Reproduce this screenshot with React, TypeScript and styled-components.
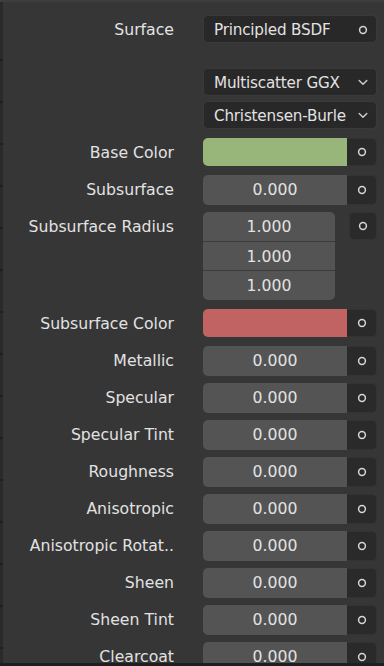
import styled, { createGlobalStyle } from 'styled-components';

const GlobalStyle = createGlobalStyle`
  html, body {
    margin: 0;
    padding: 0;
    background: #363636;
  }
  body {
    font-family: 'DejaVu Sans', 'Liberation Sans', sans-serif;
  }
`;

type Field =
  | { kind: 'menu'; text: string }
  | { kind: 'node'; text: string }
  | { kind: 'color'; color: string }
  | { kind: 'value'; value: string }
  | { kind: 'vector'; values: string[] };

interface IRow {
  label?: string;
  field: Field;
  spaceAfter?: number;
}

const ROWS: IRow[] = [
  { label: 'Surface', field: { kind: 'node', text: 'Principled BSDF' }, spaceAfter: 25 },
  { field: { kind: 'menu', text: 'Multiscatter GGX' }, spaceAfter: 5 },
  { field: { kind: 'menu', text: 'Christensen-Burle' } },
  { label: 'Base Color', field: { kind: 'color', color: '#98b57a' } },
  { label: 'Subsurface', field: { kind: 'value', value: '0.000' } },
  { label: 'Subsurface Radius', field: { kind: 'vector', values: ['1.000', '1.000', '1.000'] } },
  { label: 'Subsurface Color', field: { kind: 'color', color: '#c06362' } },
  { label: 'Metallic', field: { kind: 'value', value: '0.000' } },
  { label: 'Specular', field: { kind: 'value', value: '0.000' } },
  { label: 'Specular Tint', field: { kind: 'value', value: '0.000' } },
  { label: 'Roughness', field: { kind: 'value', value: '0.000' } },
  { label: 'Anisotropic', field: { kind: 'value', value: '0.000' } },
  { label: 'Anisotropic Rotat..', field: { kind: 'value', value: '0.000' } },
  { label: 'Sheen', field: { kind: 'value', value: '0.000' } },
  { label: 'Sheen Tint', field: { kind: 'value', value: '0.000' } },
  { label: 'Clearcoat', field: { kind: 'value', value: '0.000' } },
];

const SocketDot = () => (
  <svg width="10" height="10" viewBox="0 0 10 10">
    <circle cx="5" cy="5" r="3.4" fill="none" stroke="#d6d6d6" strokeWidth="1.5" />
  </svg>
);

const Chevron = () => (
  <svg width="10" height="7" viewBox="0 0 10 7">
    <path d="M1.2 1.5 L5 5.2 L8.8 1.5" fill="none" stroke="#cfcfcf" strokeWidth="1.4" strokeLinecap="round" strokeLinejoin="round" />
  </svg>
);

const renderField = (field: Field) => {
  switch (field.kind) {
    case 'node':
      return (
        <S.Menu>
          <S.MenuText>{field.text}</S.MenuText>
          <SocketDot />
        </S.Menu>
      );
    case 'menu':
      return (
        <S.Menu>
          <S.MenuText>{field.text}</S.MenuText>
          <Chevron />
        </S.Menu>
      );
    case 'color':
      return (
        <S.Joined>
          <S.Swatch style={{ background: field.color }} />
          <S.Socket>
            <SocketDot />
          </S.Socket>
        </S.Joined>
      );
    case 'value':
      return (
        <S.Joined>
          <S.Value>{field.value}</S.Value>
          <S.Socket>
            <SocketDot />
          </S.Socket>
        </S.Joined>
      );
    case 'vector':
      return (
        <S.VectorWrap>
          <S.Vector>
            {field.values.map((v, index) => (
              <S.VectorCell key={`${v}${index}`}>{v}</S.VectorCell>
            ))}
          </S.Vector>
          <S.LoneSocket>
            <SocketDot />
          </S.LoneSocket>
        </S.VectorWrap>
      );
  }
};

export default function App() {
  return (
    <>
      <GlobalStyle />
      <S.Screen>
        <S.Strip />
        <S.Panel>
          {ROWS.map((row, index) => (
            <S.Row key={`${row.label}${index}`} spaceAfter={row.spaceAfter ?? 9}>
              <S.Label>{row.label}</S.Label>
              {renderField(row.field)}
            </S.Row>
          ))}
        </S.Panel>
      </S.Screen>
    </>
  );
}

const S = {
  Screen: styled.div`
    width: 384px;
    height: 666px;
    display: flex;
    overflow: hidden;
    background: #363636;
    box-sizing: border-box;
    border-top: 2px solid #3d3d3d;
    border-bottom: 3px solid #1f1f1f;
  `,
  Strip: styled.div`
    width: 3px;
    flex-shrink: 0;
    background: repeating-linear-gradient(
      to bottom,
      #2a2a2a 0px,
      #2a2a2a 40px,
      #1f1f1f 40px,
      #1f1f1f 42px
    );
    background-position: 0 17px;
  `,
  Panel: styled.div`
    flex: 1;
    padding: 13px 7px 0 0;
    display: flex;
    flex-direction: column;
  `,
  Row: styled.div<{ spaceAfter: number }>`
    display: grid;
    grid-template-columns: 1fr 174px;
    column-gap: 29px;
    align-items: start;
    margin-bottom: ${({ spaceAfter }) => spaceAfter}px;
    flex-shrink: 0;
  `,
  Label: styled.div`
    height: 28px;
    line-height: 30px;
    text-align: right;
    color: #e2e2e2;
    font-size: 15.7px;
    white-space: nowrap;
  `,
  Menu: styled.div`
    height: 28px;
    box-sizing: border-box;
    display: flex;
    align-items: center;
    justify-content: space-between;
    padding: 1px 8px 0 10px;
    background: #282828;
    border: 1px solid #3a3a3a;
    border-radius: 5px;
    color: #e2e2e2;
    font-size: 15.2px;
    letter-spacing: -0.2px;
  `,
  MenuText: styled.span`
    white-space: nowrap;
    overflow: hidden;
  `,
  Joined: styled.div`
    height: 28px;
    display: grid;
    grid-template-columns: 144px 30px;
  `,
  Swatch: styled.div`
    border-radius: 5px 0 0 5px;
  `,
  Value: styled.div`
    background: #545454;
    border-radius: 5px 0 0 5px;
    color: #e2e2e2;
    font-size: 15.7px;
    line-height: 30px;
    text-align: center;
  `,
  Socket: styled.div`
    display: flex;
    align-items: center;
    justify-content: center;
    background: #2a2a2a;
    border: 1px solid #333333;
    border-left: none;
    border-radius: 0 5px 5px 0;
  `,
  VectorWrap: styled.div`
    display: grid;
    grid-template-columns: 132px 28px;
    column-gap: 14px;
    align-items: start;
  `,
  Vector: styled.div`
    height: 88px;
    display: flex;
    flex-direction: column;
    background: #545454;
    border-radius: 5px;
    overflow: hidden;
  `,
  VectorCell: styled.div`
    flex: 1;
    box-sizing: border-box;
    display: flex;
    align-items: center;
    justify-content: center;
    color: #e2e2e2;
    font-size: 15.7px;
    & + & {
      border-top: 1px solid #3c3c3c;
    }
  `,
  LoneSocket: styled.div`
    height: 28px;
    box-sizing: border-box;
    display: flex;
    align-items: center;
    justify-content: center;
    background: #2a2a2a;
    border: 1px solid #333333;
    border-radius: 5px;
  `,
};
